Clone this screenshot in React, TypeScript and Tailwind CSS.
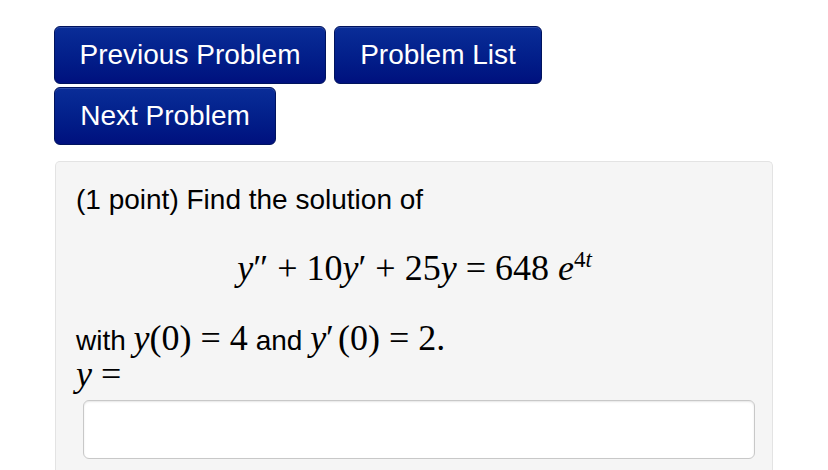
import React from 'react'

const btn =
  'h-[58px] rounded-[6px] border border-[#00135e] bg-gradient-to-b from-[#0a2d98] to-[#00107e] text-[28px] text-white shadow-[inset_0_1px_0_rgba(255,255,255,0.15)]'

const serif = "font-['Liberation_Serif','Times_New_Roman',serif]"

function V({ children }: { children: React.ReactNode }) {
  return <i className="italic">{children}</i>
}

export default function App() {
  return (
    <div className="min-h-screen bg-white font-['Liberation_Sans',Arial,sans-serif] text-black">
      <div className="flex flex-col pl-[54px] pt-[26px]">
        <div className="flex gap-[8px]">
          <button className={btn + ' w-[272px]'}>Previous Problem</button>
          <button className={btn + ' w-[208px]'}>Problem List</button>
        </div>
        <div className="mt-[3px] flex">
          <button className={btn + ' w-[222px]'}>Next Problem</button>
        </div>
      </div>

      <div className="ml-[55px] mt-[16px] h-[330px] w-[718px] rounded-t-[5px] border border-b-0 border-[#e3e3e3] bg-[#f5f5f5] pl-[20px] pr-[19px] pt-[22px]">
        <p className="text-[28px] leading-[32px]">(1 point) Find the solution of</p>

        <div className={'mt-[32px] text-center text-[36px] leading-[40px] ' + serif}>
          <V>y</V>″ + 10<V>y</V>′ + 25<V>y</V> = 648 <V>e</V>
          <span className="relative -top-[13px] inline-block text-[23px] leading-none">
            4<V>t</V>
          </span>
        </div>

        <p className="mt-[30px] text-[28px] leading-[40px]">
          with{' '}
          <span className={'text-[36px] leading-[40px] ' + serif}>
            <V>y</V>(0) = 4
          </span>{' '}
          and{' '}
          <span className={'text-[36px] leading-[40px] ' + serif}>
            <V>y</V>′<span className="ml-[4px]">(0) = 2.</span>
          </span>
        </p>

        <p className={'-mt-[3px] text-[36px] leading-[32px] ' + serif}>
          <V>y</V> =
        </p>

        <input
          type="text"
          className="ml-[7px] mt-[10px] block h-[59px] w-[672px] rounded-[6px] border border-[#c8c8c8] bg-white shadow-[inset_0_1px_2px_rgba(0,0,0,0.1)] outline-none"
        />
      </div>
    </div>
  )
}
